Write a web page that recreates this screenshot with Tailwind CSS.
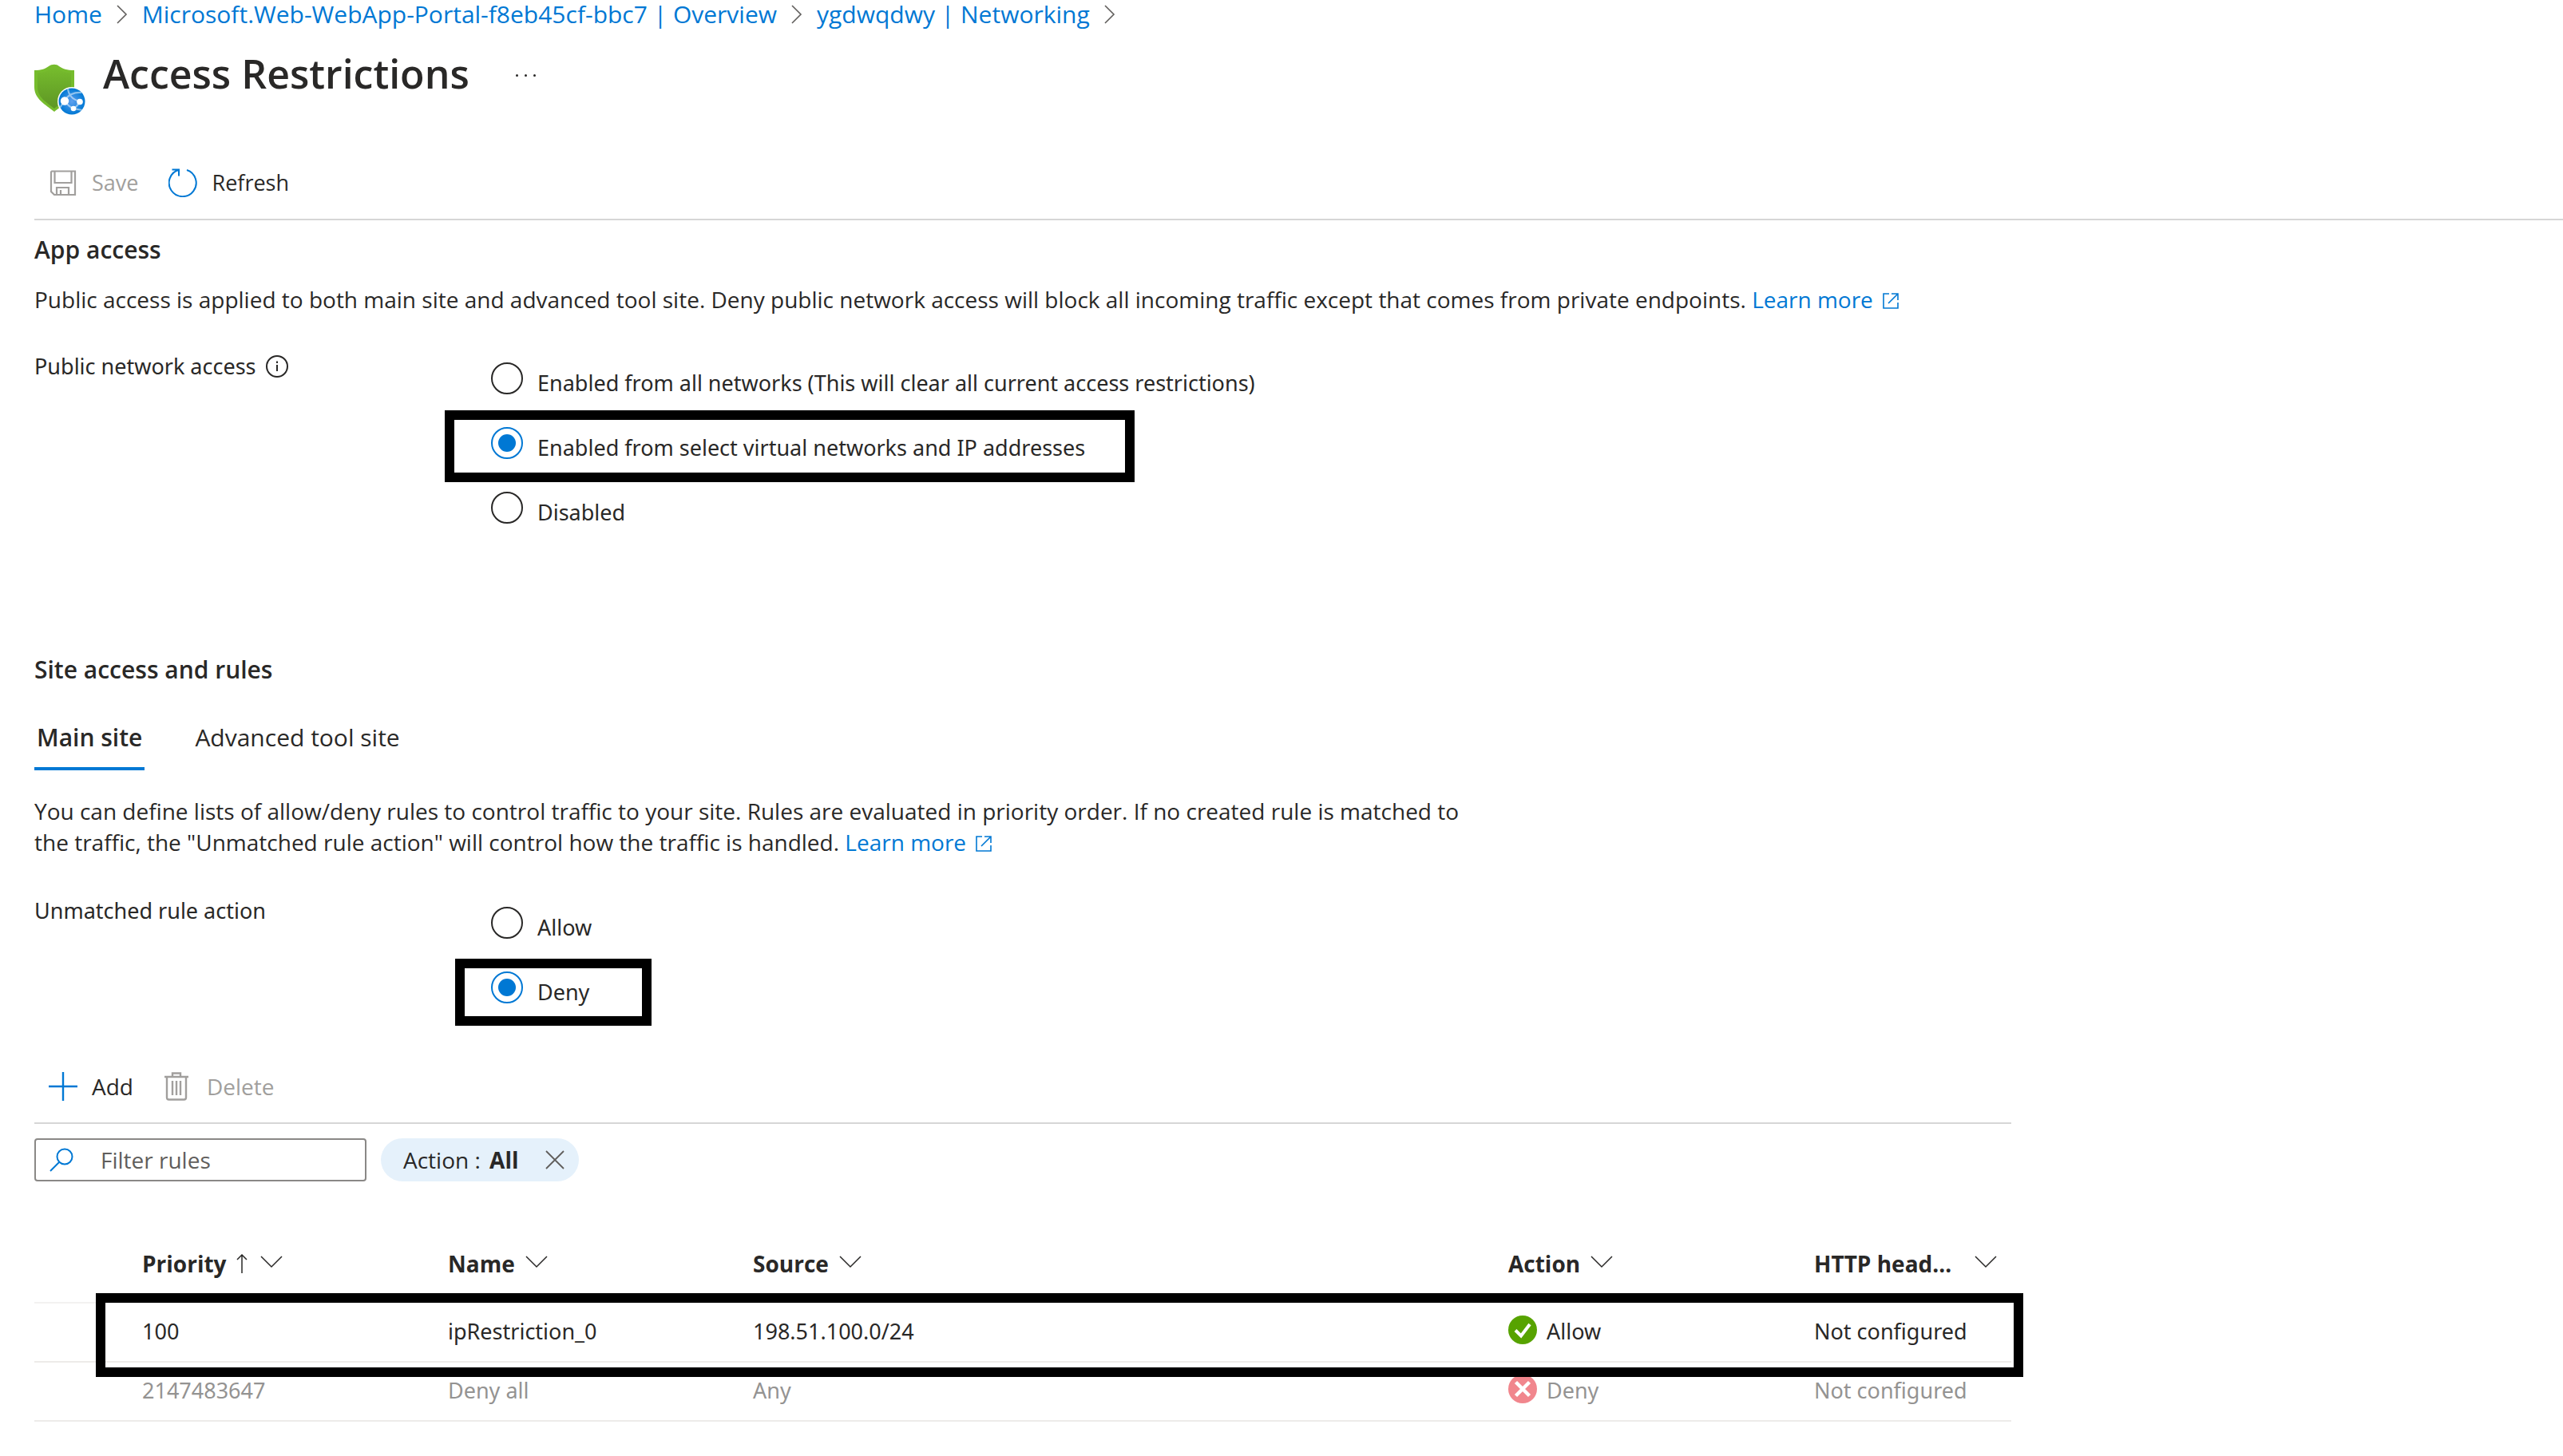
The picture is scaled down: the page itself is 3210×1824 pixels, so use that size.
<!DOCTYPE html>
<html lang="en">
<head>
<meta charset="utf-8">
<title>Access Restrictions</title>
<script src="https://cdn.jsdelivr.net/npm/@tailwindcss/browser@4"></script>
</head>
<body class="bg-white font-['Open_Sans','Noto_Sans',sans-serif] text-[28px] leading-[40px] text-[#292827]">
<svg class="hidden" aria-hidden="true">
  <symbol id="chev-right" viewBox="0 0 14 24"><path d="M1 1l11 11L1 23" fill="none" stroke="#605e5c" stroke-width="1.6"/></symbol>
  <symbol id="chev-down" viewBox="0 0 28 16"><path d="M1 1l13 13L27 1" fill="none" stroke="#292827" stroke-width="1.5"/></symbol>
  <symbol id="external" viewBox="0 0 22 22"><path d="M9 2H2v18h18v-7M8 14L20 2M12 2h8v8" fill="none" stroke="#0078d4" stroke-width="1.600"/></symbol>
</svg>
<div class="pl-[43px]">
  <nav aria-label="Breadcrumb" class="flex h-9 items-center gap-[18px] text-[30px] leading-9 text-[#0078d4] whitespace-nowrap">
    <a href="#">Home</a>
    <svg class="h-6 w-[14px]"><use href="#chev-right"/></svg>
    <a href="#">Microsoft.Web-WebApp-Portal-f8eb45cf-bbc7 | Overview</a>
    <svg class="h-6 w-[14px]"><use href="#chev-right"/></svg>
    <a href="#">ygdwqdwy | Networking</a>
    <svg class="h-6 w-[14px]"><use href="#chev-right"/></svg>
  </nav>

  <header class="mt-6 flex h-[124px] items-start">
    <svg class="mt-[20px] size-16" viewBox="0 0 64 64">
      <defs>
        <linearGradient id="shield" x1="0" y1="0" x2="0" y2="1"><stop offset="0" stop-color="#76bc2d"/><stop offset="1" stop-color="#5e9624"/></linearGradient>
        <radialGradient id="globe"><stop offset="0" stop-color="#5ea0ef"/><stop offset="1" stop-color="#0078d4"/></radialGradient>
        <clipPath id="globe-clip"><circle cx="47" cy="47" r="16.500"/></clipPath>
      </defs>
      <path d="M0 8C9 8 14 6 18 3C22 0 28 0 31 3C35 6 41 8 50 8V29C50 44 36 51 25 60C14 51 0 44 0 29Z" fill="#76bc2d"/>
      <path d="M4 11C12 11 17 9 21 6C23 4 27 4 29 6C32 9 38 11 46 11V29C46 42 35 48 25 56C15 48 4 42 4 29Z" fill="url(#shield)"/>
      <circle cx="47" cy="47" r="18" fill="#fff"/>
      <circle cx="47" cy="47" r="16.5" fill="url(#globe)"/>
      <g clip-path="url(#globe-clip)">
        <path d="M38 46C42 39 50 35 59 36M42 31C43 40 49 45 57 47M57 47C55 51 53 54 49 56M38 46C41 51 44 54 49 56M38 46L32 55M49 56L60 58" fill="none" stroke="#fff" stroke-opacity=".5" stroke-width="2.200"/>
      </g>
      <circle cx="38" cy="46.500" r="5.200" fill="#fff"/><circle cx="57" cy="47.500" r="3.800" fill="#fff"/><circle cx="49" cy="56" r="3.300" fill="#fff"/>
    </svg>
    <h1 class="ml-[22px] text-[50px] leading-[64px] font-semibold">Access Restrictions</h1>
    <button type="button" aria-label="More" class="mt-[20px] ml-[58px] flex h-7 items-center gap-2">
      <span class="size-[3px] rounded-full bg-[#292827]"></span><span class="size-[3px] rounded-full bg-[#292827]"></span><span class="size-[3px] rounded-full bg-[#292827]"></span>
    </button>
  </header>

  <div class="flex h-[92px] items-center border-b-2 border-[#d6d6d6] pl-[18px] text-[27px]">
    <button type="button" disabled class="flex items-center text-[#a19f9d]">
      <svg class="mr-[18px] size-9" viewBox="0 0 36 36" fill="none" stroke="#a19f9d" stroke-width="2.200"><path d="M4 3.500h29v29.500H7l-4-4V4.500zM7.500 4v14h21V4M10 33v-9h15v9M15 33v-6"/></svg>Save</button>
    <button type="button" class="ml-[38px] flex items-center">
      <svg class="mr-[18px] size-9" viewBox="0 0 36 36" fill="none" stroke="#0078d4" stroke-width="2"><path d="M23 2A17 17 0 1 1 13 1.800M4.500 1.500H13v8"/></svg>Refresh</button>
  </div>

  <main class="max-w-[2476px]">
    <h2 class="mt-[17px] text-[30px] font-semibold">App access</h2>
    <p class="mt-[22px] whitespace-nowrap">Public access is applied to both main site and advanced tool site. Deny public network access will block all incoming traffic except that comes from private endpoints. <a href="#" class="text-[#0078d4]">Learn more <svg class="ml-1 inline size-[22px] align-[-2px]"><use href="#external"/></svg></a></p>

    <fieldset class="mt-[44px] flex items-start font-['Noto_Sans','Open_Sans',sans-serif] text-[27px]">
      <legend class="float-left flex w-[572px] items-center gap-3">Public network access
        <svg class="size-7" viewBox="0 0 28 28"><circle cx="14" cy="14" r="13" fill="none" stroke="#292827" stroke-width="2"/><path d="M14 12v8M14 7.500v2.500" stroke="#292827" stroke-width="2"/></svg>
      </legend>
      <div class="pt-[15px]">
        <label class="flex h-[81px] items-start gap-[18px]"><input type="radio" name="access" class="grid size-10 appearance-none place-content-center rounded-full border-2 border-[#292827]"><span class="mt-[6px]">Enabled from all networks (This will clear all current access restrictions)</span></label>
        <label class="relative flex h-[81px] items-start gap-[18px]"><input type="radio" name="access" checked class="grid size-10 appearance-none place-content-center rounded-full border-2 border-[#0078d4] before:size-[22px] before:rounded-full before:bg-[#0078d4]"><span class="mt-[6px]">Enabled from select virtual networks and IP addresses</span>
          <span class="pointer-events-none absolute -top-[21px] -left-[58px] h-[90px] w-[864px] border-12 border-black"></span></label>
        <label class="flex h-[81px] items-start gap-[18px]"><input type="radio" name="access" class="grid size-10 appearance-none place-content-center rounded-full border-2 border-[#292827]"><span class="mt-[6px]">Disabled</span></label>
      </div>
    </fieldset>

    <h2 class="mt-[122px] text-[30px] font-semibold">Site access and rules</h2>
    <div role="tablist" class="mt-[43px] flex gap-[60px] text-[30px] leading-[44px]">
      <button type="button" role="tab" aria-selected="true" class="border-b-4 border-[#0078d4] px-[3px] pb-[15px] font-semibold">Main site</button>
      <button type="button" role="tab" aria-selected="false" class="border-b-4 border-transparent px-[3px] pb-[15px]">Advanced tool site</button>
    </div>
    <p class="mt-8 leading-[39px]">You can define lists of allow/deny rules to control traffic to your site. Rules are evaluated in priority order. If no created rule is matched to<br>the traffic, the "Unmatched rule action" will control how the traffic is handled. <a href="#" class="text-[#0078d4]">Learn more <svg class="ml-1 inline size-[22px] align-[-2px]"><use href="#external"/></svg></a></p>

    <fieldset class="mt-[46px] flex items-start font-['Noto_Sans','Open_Sans',sans-serif] text-[27px]">
      <legend class="float-left w-[572px]">Unmatched rule action</legend>
      <div class="pt-[15px]">
        <label class="flex h-[81px] items-start gap-[18px]"><input type="radio" name="unmatched" class="grid size-10 appearance-none place-content-center rounded-full border-2 border-[#292827]"><span class="mt-[6px]">Allow</span></label>
        <label class="relative flex h-[81px] items-start gap-[18px]"><input type="radio" name="unmatched" checked class="grid size-10 appearance-none place-content-center rounded-full border-2 border-[#0078d4] before:size-[22px] before:rounded-full before:bg-[#0078d4]"><span class="mt-[6px]">Deny</span>
          <span class="pointer-events-none absolute -top-[16px] -left-[45px] h-[84px] w-[246px] border-12 border-black"></span></label>
      </div>
    </fieldset>

    <div class="mt-[18px] flex h-[92px] items-center border-b-2 border-[#d6d6d6] pl-[18px]">
      <button type="button" class="flex items-center">
        <svg class="mr-[18px] size-9" viewBox="0 0 36 36" stroke="#0078d4" stroke-width="2.4"><path d="M18 0v36M0 18h36"/></svg>Add</button>
      <button type="button" disabled class="ml-[36px] flex items-center text-[#a19f9d]">
        <svg class="mr-[20px] size-9" viewBox="0 0 36 36" fill="none" stroke="#a19f9d" stroke-width="2.4"><path d="M3 6h30M13 6V1.500h10V6M6 6v26q0 2.500 2.500 2.500h19q2.500 0 2.500-2.500V6M13 11v18M18 11v18M23 11v18"/></svg>Delete</button>
    </div>

    <div class="mt-[18px] flex gap-[18px]">
      <label class="flex h-[54px] w-[416px] items-center rounded border-2 border-[#8a8886] pl-[17px]">
        <svg class="size-[30px] shrink-0" viewBox="0 0 30 30" fill="none" stroke="#0078d4" stroke-width="2"><circle cx="19" cy="11" r="9.500"/><path d="M12 18L1 29"/></svg>
        <input type="text" aria-label="Filter rules" placeholder="Filter rules" class="ml-[34px] w-full min-w-0 outline-none placeholder:text-[#605e5c] placeholder:opacity-100">
      </label>
      <div class="flex h-[54px] w-[248px] items-center justify-between rounded-full bg-[#e5f1fb] pr-[18px] pl-[28px]">
        <span>Action : <b class="ml-1">All</b></span>
        <button type="button" aria-label="Remove filter"><svg class="size-6" viewBox="0 0 24 24" stroke="#605e5c" stroke-width="1.800"><path d="M1 1l22 22M23 1L1 23"/></svg></button>
      </div>
    </div>

    <div class="relative mt-[54px]">
      <table class="w-full table-fixed text-left">
        <colgroup><col class="w-[135px]"><col class="w-[383px]"><col class="w-[382px]"><col><col class="w-[383px]"><col class="w-[247px]"></colgroup>
        <thead>
          <tr class="h-[98px] border-b-2 border-[#f3f2f1]">
            <th></th>
            <th><span class="flex items-center">Priority<svg class="ml-3 h-6 w-[14px]" viewBox="0 0 14 24" fill="none" stroke="#292827" stroke-width="1.500"><path d="M7 24V1M1 7l6-6 6 6"/></svg><svg class="mb-1 ml-[16px] h-4 w-7"><use href="#chev-down"/></svg></span></th>
            <th><span class="flex items-center">Name<svg class="mb-1 ml-[13px] h-4 w-7"><use href="#chev-down"/></svg></span></th>
            <th><span class="flex items-center">Source<svg class="mb-1 ml-[13px] h-4 w-7"><use href="#chev-down"/></svg></span></th>
            <th><span class="flex items-center">Action<svg class="mb-1 ml-[13px] h-4 w-7"><use href="#chev-down"/></svg></span></th>
            <th><span class="flex items-center justify-between pr-[18px]">HTTP head...<svg class="mb-1 h-4 w-7"><use href="#chev-down"/></svg></span></th>
          </tr>
        </thead>
        <tbody class="font-['Noto_Sans','Open_Sans',sans-serif] text-[27px]">
          <tr class="h-[74px] border-b-2 border-[#edebe9] *:pb-[3px]">
            <td></td><td>100</td><td>ipRestriction_0</td><td>198.51.100.0/24</td>
            <td><span class="flex items-center gap-3"><svg class="mb-1 size-9" viewBox="0 0 36 36"><circle cx="18" cy="18" r="18" fill="#57a300"/><path d="M9 18.500l7 7L27 11" fill="none" stroke="#fff" stroke-width="4"/></svg>Allow</span></td>
            <td>Not configured</td>
          </tr>
          <tr class="h-[74px] border-b-2 border-[#edebe9] text-[#949392] *:pb-[3px]">
            <td></td><td>2147483647</td><td>Deny all</td><td>Any</td>
            <td><span class="flex items-center gap-3"><svg class="mb-1 size-9" viewBox="0 0 36 36"><circle cx="18" cy="18" r="18" fill="#f1868d"/><path d="M9.500 9.500l17 17M26.500 9.500l-17 17" stroke="#fff" stroke-width="4.500"/></svg>Deny</span></td>
            <td>Not configured</td>
          </tr>
        </tbody>
      </table>
      <div class="pointer-events-none absolute top-[86px] -right-[15px] left-[77px] h-[105px] border-12 border-black"></div>
    </div>
  </main>
</div>
</body>
</html>
